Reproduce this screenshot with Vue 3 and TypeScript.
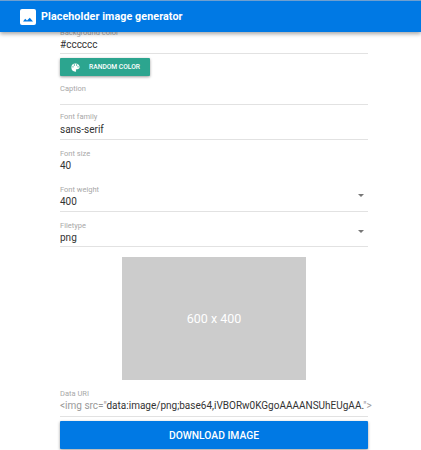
<script setup lang="ts">
interface Field { label: string; value: string; select?: boolean; noLine?: boolean; cls: string }
const top: Field = { label: 'Background color', value: '#cccccc', cls: 'f-bg' }
const fields: Field[] = [
  { label: 'Caption', value: '', cls: 'f-caption' },
  { label: 'Font family', value: 'sans-serif', cls: 'f-family' },
  { label: 'Font size', value: '40', noLine: true, cls: 'f-size' },
  { label: 'Font weight', value: '400', select: true, cls: 'f-weight' },
  { label: 'Filetype', value: 'png', select: true, cls: 'f-type' },
]
</script>

<template>
  <div class="page">
    <header class="bar">
      <svg class="logo" width="16" height="16" viewBox="0 0 16 16">
        <rect x="0" y="0" width="16" height="16" rx="2" fill="#fff" />
        <path d="M3 12.5 L5.2 9.8 L7 11.6 L9.8 8.8 L13 12.5 Z" fill="#0079e4" />
      </svg>
      <span class="title">Placeholder image generator</span>
    </header>
    <main class="form">
      <div class="field" :class="top.cls">
        <label class="lbl">{{ top.label }}</label>
        <div class="val">{{ top.value }}</div>
      </div>
      <button class="random" type="button">
        <svg width="11" height="11" viewBox="0 0 24 24">
          <path fill="#fff" d="M12 3a9 9 0 0 0 0 18c.83 0 1.5-.67 1.5-1.5 0-.39-.15-.74-.39-1.01-.23-.26-.38-.61-.38-.99 0-.83.67-1.5 1.5-1.5H16c2.76 0 5-2.24 5-5 0-4.42-4.03-8-9-8zm-5.5 9a1.5 1.5 0 1 1 0-3 1.5 1.5 0 0 1 0 3zm3-4a1.5 1.5 0 1 1 0-3 1.5 1.5 0 0 1 0 3zm5 0a1.5 1.5 0 1 1 0-3 1.5 1.5 0 0 1 0 3zm3 4a1.5 1.5 0 1 1 0-3 1.5 1.5 0 0 1 0 3z" />
        </svg>
        <span>RANDOM COLOR</span>
      </button>
      <div v-for="f in fields" :key="f.label" class="field" :class="[f.cls, { 'no-line': f.noLine }]">
        <label class="lbl">{{ f.label }}</label>
        <div class="val">{{ f.value }}</div>
        <span v-if="f.select" class="caret"></span>
      </div>
      <div class="preview">600 x 400</div>
      <div class="field f-uri">
        <label class="lbl">Data URI</label>
        <div class="val uri"><span class="dim">&lt;img src="</span>data:image/png;base64,iVBORw0KGgoAAAANSUhEUgAA.<span class="dim">"&gt;</span></div>
      </div>
      <button class="download" type="button">DOWNLOAD IMAGE</button>
    </main>
  </div>
</template>

<style scoped>
.page { width: 421px; height: 450px; overflow: hidden; background: #fff; font-family: Roboto, sans-serif; }
.bar {
  position: relative; z-index: 2; box-sizing: border-box; height: 32px;
  border-top: 1px solid #6f9fcf; background: #0079e4; color: #fff;
  display: flex; align-items: center; padding-left: 20px; gap: 5px;
  box-shadow: 0 2px 4px rgba(0,0,0,.35);
}
.title { font-size: 10.7px; font-weight: 700; letter-spacing: .1px; }
.form { width: 308px; margin-left: 60px; display: flex; flex-direction: column; }
.field { position: relative; box-sizing: border-box; border-bottom: 1px solid #e2e2e2; }
.no-line { border-bottom-color: transparent; }
.lbl { display: block; font-size: 7.5px; line-height: 10px; color: #a8a8a8; }
.val { font-size: 10px; line-height: 13px; height: 13px; color: #333; }
.f-bg { margin-top: -4px; height: 26px; }
.f-bg .val { margin-top: 0; }
.random {
  margin-top: 4px; width: 90px; height: 18px; padding: 0 0 0 10px; border: 0; border-radius: 1px;
  background: #2ca58f; color: #fff; display: flex; align-items: center; gap: 8px;
  font: 500 6.7px Roboto, sans-serif; box-shadow: 0 1px 3px rgba(0,0,0,.4);
}
.f-caption { margin-top: 8px; height: 21px; }
.f-family { margin-top: 7px; height: 28px; }
.f-family .val { margin-top: 1px; }
.f-size { margin-top: 9px; height: 28px; }
.f-weight { margin-top: 8px; height: 27px; }
.f-type { margin-top: 9px; height: 26px; }
.caret {
  position: absolute; right: 4px; top: 9px; width: 0; height: 0;
  border-left: 3px solid transparent; border-right: 3px solid transparent; border-top: 3px solid #777;
}
.preview {
  align-self: center; margin-top: 10px; width: 184px; height: 123px; background: #ccc; color: #fff;
  font-size: 12.5px; display: flex; align-items: center; justify-content: center;
}
.f-uri { margin-top: 9px; height: 28px; }
.uri { font-size: 10px; white-space: nowrap; color: #333; }
.dim { color: #9a9a9a; }
.download {
  margin-top: 4px; height: 28px; border: 0; border-radius: 1px; background: #0079e4; color: #fff;
  font: 500 10.3px Roboto, sans-serif; box-shadow: 0 1px 3px rgba(0,0,0,.4);
}
</style>
